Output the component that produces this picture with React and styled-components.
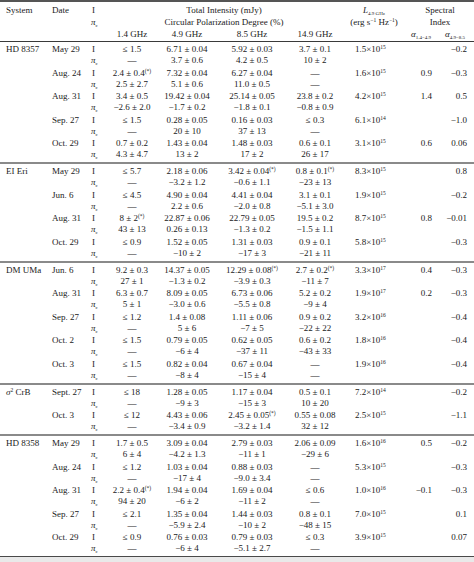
import React from 'react'
import styled, { createGlobalStyle } from 'styled-components'

const GlobalStyle = createGlobalStyle`
    html, body {
        margin: 0;
        padding: 0;
        background: #ffffff;
    }
    body {
        font-family: "Liberation Serif", "Times New Roman", serif;
        color: #1a1a1a;
    }
`

const COLS = '46px 40px 20px 52px 58px 72px 54px 64px 30px 38px'

const Page = styled.div`
    width: 474px;
    height: 562px;
    background: #ffffff;
    display: flex;
    flex-direction: column;
    overflow: hidden;
`

const Header = styled.div`
    display: grid;
    grid-template-columns: ${COLS};
    grid-template-rows: 12px 12px 12px;
    border-top: 2px solid #555;
    border-bottom: 1px solid #3a3a3a;
    padding: 2px 0 1px;
    font-size: 9px;
    line-height: 12px;
`

const HeadCell = styled.div`
    grid-column: ${props => props.col};
    grid-row: ${props => props.row};
    text-align: ${props => props.align || 'center'};
    padding-left: ${props => props.pl || 0}px;
    white-space: nowrap;
`

const Group = styled.div`
    border-top: ${props => props.first ? 'none' : '2px solid #8a8a8a'};
    padding: 2px 0 2px;
    display: flex;
    flex-direction: column;
    gap: 1.5px;
`

const Block = styled.div`
    display: grid;
    grid-template-columns: ${COLS};
    grid-template-rows: 11px 11px;
    font-size: 9px;
    line-height: 11px;
`

const Cell = styled.div`
    grid-column: ${props => props.col};
    grid-row: ${props => props.row};
    text-align: ${props => props.align || 'center'};
    padding-left: ${props => props.pl || 0}px;
    padding-right: ${props => props.pr || 0}px;
    white-space: nowrap;
`

const Pi = styled.span`
    font-style: italic;
`

const Sub = styled.sub`
    font-size: 5px;
    vertical-align: -1.5px;
    line-height: 0;
`

const Sup = styled.sup`
    font-size: 5.5px;
    vertical-align: 3.5px;
    line-height: 0;
`

const Italic = styled.span`
    font-style: italic;
`

const Footer = styled.div`
    border-top: 1.5px solid #4a4a4a;
    flex: 1;
    background: #e9e9e9;
`

const PiC = () => <><Pi>π</Pi><Sub>c</Sub></>

function Val({ v }) {
    if (!v) return null
    if (v.endsWith('*')) return <>{v.slice(0, -1)}<Sup>(*)</Sup></>
    return <>{v}</>
}

function Lum({ v }) {
    const [m, e] = v.split('^')
    return <>{m}×10<Sup>{e}</Sup></>
}

const data = [
    {
        name: 'HD 8357',
        rows: [
            ['May 29', ['≤ 1.5', '6.71 ± 0.04', '5.92 ± 0.03', '3.7 ± 0.1'], ['—', '3.7 ± 0.6', '4.2 ± 0.5', '10 ± 2'], '1.5^15', '', '−0.2'],
            ['Aug. 24', ['2.4 ± 0.4*', '7.32 ± 0.04', '6.27 ± 0.04', '—'], ['2.5 ± 2.7', '5.1 ± 0.6', '11.0 ± 0.5', '—'], '1.6^15', '0.9', '−0.3'],
            ['Aug. 31', ['3.4 ± 0.5', '19.42 ± 0.04', '25.14 ± 0.05', '23.8 ± 0.2'], ['−2.6 ± 2.0', '−1.7 ± 0.2', '−1.8 ± 0.1', '−0.8 ± 0.9'], '4.2^15', '1.4', '0.5'],
            ['Sep. 27', ['≤ 1.5', '0.28 ± 0.05', '0.16 ± 0.03', '≤ 0.3'], ['—', '20 ± 10', '37 ± 13', '—'], '6.1^14', '', '−1.0'],
            ['Oct. 29', ['0.7 ± 0.2', '1.43 ± 0.04', '1.48 ± 0.03', '0.6 ± 0.1'], ['4.3 ± 4.7', '13 ± 2', '17 ± 2', '26 ± 17'], '3.1^15', '0.6', '0.06'],
        ],
    },
    {
        name: 'EI Eri',
        rows: [
            ['May 29', ['≤ 5.7', '2.18 ± 0.06', '3.42 ± 0.04*', '0.8 ± 0.1*'], ['—', '−3.2 ± 1.2', '−0.6 ± 1.1', '−23 ± 13'], '8.3^15', '', '0.8'],
            ['Jun. 6', ['≤ 4.5', '4.90 ± 0.04', '4.41 ± 0.04', '3.1 ± 0.1'], ['—', '2.2 ± 0.6', '−2.0 ± 0.8', '−5.1 ± 3.0'], '1.9^15', '', '−0.2'],
            ['Aug. 31', ['8 ± 2*', '22.87 ± 0.06', '22.79 ± 0.05', '19.5 ± 0.2'], ['43 ± 13', '0.26 ± 0.13', '−1.3 ± 0.2', '−1.5 ± 1.1'], '8.7^15', '0.8', '−0.01'],
            ['Oct. 29', ['≤ 0.9', '1.52 ± 0.05', '1.31 ± 0.03', '0.9 ± 0.1'], ['—', '−10 ± 2', '−17 ± 3', '−21 ± 11'], '5.8^15', '', '−0.3'],
        ],
    },
    {
        name: 'DM UMa',
        rows: [
            ['Jun. 6', ['9.2 ± 0.3', '14.37 ± 0.05', '12.29 ± 0.08*', '2.7 ± 0.2*'], ['27 ± 1', '−1.3 ± 0.2', '−3.9 ± 0.3', '−11 ± 7'], '3.3^17', '0.4', '−0.3'],
            ['Aug. 31', ['6.3 ± 0.7', '8.09 ± 0.05', '6.73 ± 0.06', '5.2 ± 0.2'], ['5 ± 1', '−3.0 ± 0.6', '−5.5 ± 0.8', '−9 ± 4'], '1.9^17', '0.2', '−0.3'],
            ['Sep. 27', ['≤ 1.2', '1.4 ± 0.08', '1.11 ± 0.06', '0.9 ± 0.2'], ['—', '5 ± 6', '−7 ± 5', '−22 ± 22'], '3.2^16', '', '−0.4'],
            ['Oct. 2', ['≤ 1.5', '0.79 ± 0.05', '0.62 ± 0.05', '0.6 ± 0.2'], ['—', '−6 ± 4', '−37 ± 11', '−43 ± 33'], '1.8^16', '', '−0.4'],
            ['Oct. 3', ['≤ 1.5', '0.82 ± 0.04', '0.67 ± 0.04', '—'], ['—', '−8 ± 4', '−15 ± 4', '—'], '1.9^16', '', '−0.4'],
        ],
    },
    {
        name: <><Italic>σ</Italic><Sup>2</Sup> CrB</>,
        rows: [
            ['Sept. 27', ['≤ 18', '1.28 ± 0.05', '1.17 ± 0.04', '0.5 ± 0.1'], ['—', '−9 ± 3', '−15 ± 3', '10 ± 20'], '7.2^14', '', '−0.2'],
            ['Oct. 3', ['≤ 12', '4.43 ± 0.06', '2.45 ± 0.05*', '0.55 ± 0.08'], ['—', '−3.4 ± 0.9', '−3.2 ± 1.4', '32 ± 12'], '2.5^15', '', '−1.1'],
        ],
    },
    {
        name: 'HD 8358',
        rows: [
            ['May 29', ['1.7 ± 0.5', '3.09 ± 0.04', '2.79 ± 0.03', '2.06 ± 0.09'], ['6 ± 4', '−4.2 ± 1.3', '−11 ± 1', '−29 ± 6'], '1.6^16', '0.5', '−0.2'],
            ['Aug. 24', ['≤ 1.2', '1.03 ± 0.04', '0.88 ± 0.03', '—'], ['—', '−17 ± 4', '−9.0 ± 3.4', '—'], '5.3^15', '', '−0.3'],
            ['Aug. 31', ['2.2 ± 0.4*', '1.94 ± 0.04', '1.69 ± 0.04', '≤ 0.6'], ['94 ± 20', '−6 ± 2', '−11 ± 2', '—'], '1.0^16', '−0.1', '−0.3'],
            ['Sep. 27', ['≤ 2.1', '1.35 ± 0.04', '1.44 ± 0.03', '0.8 ± 0.1'], ['—', '−5.9 ± 2.4', '−10 ± 2', '−48 ± 15'], '7.0^15', '', '0.1'],
            ['Oct. 29', ['≤ 0.9', '0.76 ± 0.03', '0.79 ± 0.03', '≤ 0.3'], ['—', '−6 ± 4', '−5.1 ± 2.7', '—'], '3.9^15', '', '0.07'],
        ],
    },
]

function DateBlock({ name, row }) {
    const [date, iVals, piVals, lum, a1, a2] = row
    return (
        <Block>
            <Cell col={1} row={1} align="left" pl={6}>{name}</Cell>
            <Cell col={2} row={1} align="left" pl={6}>{date}</Cell>
            <Cell col={3} row={1} align="left" pl={6}>I</Cell>
            <Cell col={3} row={2} align="left" pl={5}><PiC /></Cell>
            {iVals.map((v, i) => (
                <Cell key={'i' + i} col={4 + i} row={1}><Val v={v} /></Cell>
            ))}
            {piVals.map((v, i) => (
                <Cell key={'p' + i} col={4 + i} row={2}><Val v={v} /></Cell>
            ))}
            <Cell col={8} row={1} align="left" pl={13}><Lum v={lum} /></Cell>
            <Cell col={9} row={1} align="right" pr={4}>{a1}</Cell>
            <Cell col={10} row={1} align="right" pr={7}>{a2}</Cell>
        </Block>
    )
}

export default function App() {
    return (
        <Page>
            <GlobalStyle />
            <Header>
                <HeadCell col={1} row={1} align="left" pl={6}>System</HeadCell>
                <HeadCell col={2} row={1} align="left" pl={6}>Date</HeadCell>
                <HeadCell col={3} row={1} align="left" pl={6}>I</HeadCell>
                <HeadCell col={3} row={2} align="left" pl={5}><PiC /></HeadCell>
                <HeadCell col="4 / 8" row={1}>Total Intensity (mJy)</HeadCell>
                <HeadCell col="4 / 8" row={2}>Circular Polarization Degree (%)</HeadCell>
                <HeadCell col={4} row={3}>1.4 GHz</HeadCell>
                <HeadCell col={5} row={3}>4.9 GHz</HeadCell>
                <HeadCell col={6} row={3}>8.5 GHz</HeadCell>
                <HeadCell col={7} row={3}>14.9 GHz</HeadCell>
                <HeadCell col={8} row={1}><Italic>L</Italic><Sub>4.9 GHz</Sub></HeadCell>
                <HeadCell col={8} row={2}>(erg s<Sup>−1</Sup> Hz<Sup>−1</Sup>)</HeadCell>
                <HeadCell col="9 / 11" row={1}>Spectral</HeadCell>
                <HeadCell col="9 / 11" row={2}>Index</HeadCell>
                <HeadCell col={9} row={3}><Italic>α</Italic><Sub>1.4−4.9</Sub></HeadCell>
                <HeadCell col={10} row={3}><Italic>α</Italic><Sub>4.9−8.5</Sub></HeadCell>
            </Header>
            {data.map((g, gi) => (
                <Group key={gi} first={gi === 0}>
                    {g.rows.map((r, ri) => (
                        <DateBlock key={ri} name={ri === 0 ? g.name : null} row={r} />
                    ))}
                </Group>
            ))}
            <Footer />
        </Page>
    )
}
